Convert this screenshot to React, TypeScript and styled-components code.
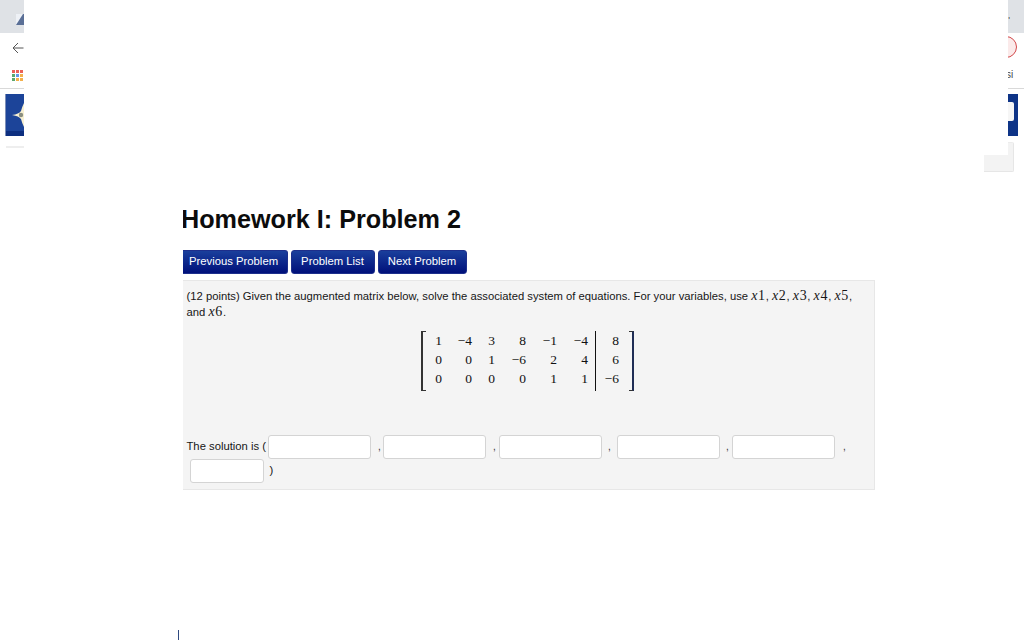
import React from 'react';
import styled, { createGlobalStyle } from 'styled-components';

const GlobalStyle = createGlobalStyle`
  html, body {
    margin: 0;
    padding: 0;
    background: #fff;
  }
  body {
    font-family: "Liberation Sans", Arial, sans-serif;
  }
`;

const Page = styled.div`
  position: relative;
  width: 1024px;
  height: 640px;
  overflow: hidden;
  display: grid;
  grid-template-columns: 24px 984px 16px;
`;

const SideStrip = styled.div`
  display: flex;
  flex-direction: column;
  height: 640px;
`;

const TabBar = styled.div`
  height: 33px;
  flex: none;
  background: #dfe2e6;
  box-sizing: border-box;
  display: flex;
  justify-content: flex-end;
  padding-top: 14px;
`;

const TabLogo = styled.div`
  width: 8px;
  height: 11px;
  background: #eef1f6;
  display: flex;
  align-items: flex-end;
  svg { display: block; }
`;

const TabCaret = styled.div`
  padding-top: 2px;
  margin-right: 14px;
  font-size: 9px;
  line-height: 8px;
  color: #444;
`;

const ToolRow = styled.div<{ $h: number }>`
  height: ${(p) => p.$h}px;
  flex: none;
  display: flex;
  align-items: center;
  padding-left: 12px;
`;

const RightToolRow = styled(ToolRow)`
  padding-left: 0;
  position: relative;
`;

const LabelRow = styled(ToolRow)`
  padding-left: 0;
  overflow: hidden;
`;

const AppsGrid = styled.div`
  display: grid;
  grid-template-columns: repeat(3, 3px);
  grid-auto-rows: 3px;
  gap: 1px;
  opacity: 0.85;
`;

const AppDot = styled.span<{ $c: string }>`
  background: ${(p) => p.$c};
`;

const Rule = styled.div`
  height: 1px;
  flex: none;
  background: #d9d9d9;
`;

const Banner = styled.div`
  flex: none;
  height: 42px;
  margin: 5px 0 0 5px;
  background: linear-gradient(#1c4499 0, #1c4499 37px, #0d2f80 37px);
  border-left: 1px solid #7d8fb8;
  display: flex;
  align-items: center;
  justify-content: flex-end;
  overflow: hidden;
`;

const RightBanner = styled.div`
  flex: none;
  height: 42px;
  width: 10px;
  margin-top: 5px;
  background: #0e3487;
  box-sizing: border-box;
  padding-top: 8px;
`;

const BannerPill = styled.div`
  width: 6px;
  height: 19px;
  background: #f6f6f6;
  border-radius: 0 2px 2px 0;
`;

const FaintLine = styled.div`
  flex: none;
  height: 2px;
  margin: 10px 0 0 6px;
  background: #eeeeee;
`;

const CornerBox = styled.div`
  flex: none;
  box-sizing: border-box;
  width: 6px;
  height: 30px;
  margin-top: 6px;
  background: #f3f3f3;
  border-right: 1px solid #e6e6e6;
  border-bottom: 1px solid #e6e6e6;
  border-top: 1px solid #ececec;
  border-radius: 0 2px 2px 0;
`;

const Circle = styled.div`
  position: absolute;
  left: -13px;
  top: 3px;
  width: 22px;
  height: 22px;
  box-sizing: border-box;
  border: 1px solid #d2484a;
  border-radius: 50%;
  background: #fbeaea;
  clip-path: inset(0 0 0 13px);
`;

const SmallLabel = styled.span`
  margin-left: -2px;
  font-size: 10px;
  line-height: 12px;
  color: #444;
`;

const Content = styled.main`
  display: flex;
  flex-direction: column;
  padding-left: 159px;
  height: 640px;
  box-sizing: border-box;
`;

const CornerTail = styled.div`
  align-self: flex-end;
  flex: none;
  box-sizing: border-box;
  width: 24px;
  height: 17px;
  margin-top: 155px;
  background: #f3f3f3;
  border-bottom: 1px solid #e6e6e6;
`;

const TitleClip = styled.div`
  margin-top: 32px;
  height: 30px;
  width: 400px;
  overflow: hidden;
`;

const Title = styled.h1`
  margin: 0 0 0 -2px;
  font-size: 25.2px;
  line-height: 30px;
  font-weight: 700;
  color: #0c0c0c;
  white-space: nowrap;
`;

const NavRow = styled.nav`
  display: flex;
  gap: 3px;
  margin-top: 16px;
`;

const NavButton = styled.button<{ $w: number; $first?: boolean }>`
  width: ${(p) => p.$w}px;
  height: 24px;
  padding: 0 ${(p) => (p.$first ? 3 : 1)}px 2px 0;
  border: 1px solid #1d2f8c;
  border-left-width: ${(p) => (p.$first ? 0 : 1)}px;
  border-radius: ${(p) => (p.$first ? '0 3px 3px 0' : '3px')};
  background: linear-gradient(#1a3f9c, #00107a);
  color: #fff;
  font-family: "Liberation Sans", Arial, sans-serif;
  font-size: 11.3px;
`;

const Panel = styled.section`
  width: 692px;
  height: 210px;
  margin-top: 6px;
  box-sizing: border-box;
  padding: 7px 4px 0 3.5px;
  background: #f4f4f4;
  border-top: 1px solid #e7e7e7;
  border-right: 1px solid #e7e7e7;
  border-bottom: 1px solid #e7e7e7;
  font-size: 11.25px;
  line-height: 16px;
  color: #161616;
`;

const Prompt = styled.p`
  margin: 0;
  width: 680px;
`;

const MathText = styled.span`
  font-family: "Liberation Serif", "Times New Roman", serif;
  font-size: 14px;
  letter-spacing: 0.65px;
`;

const Var = styled.i`
  font-style: italic;
`;

const MatrixWrap = styled.div`
  display: flex;
  margin: 11px 0 0 234.5px;
  width: 212px;
  height: 60px;
  position: relative;
  font-family: "Liberation Serif", "Times New Roman", serif;
  font-size: 13.5px;
  color: #111;
`;

const Bracket = styled.div<{ $side: 'left' | 'right' }>`
  flex: none;
  width: 5px;
  height: 60px;
  box-sizing: border-box;
  border-top: 1px solid #333;
  border-bottom: 1px solid #333;
  ${(p) =>
    p.$side === 'left'
      ? 'border-left: 2px solid #333;'
      : 'border-right: 2px solid #1f2d55; margin-left: 10px;'}
`;

const MatrixGrid = styled.div`
  flex: none;
  display: grid;
  grid-template-columns: 16px 30px 23px 31px 31px 31px 31px;
  grid-auto-rows: 19px;
`;

const Cell = styled.span`
  text-align: right;
  line-height: 19px;
  white-space: nowrap;
`;

const VBar = styled.div`
  position: absolute;
  left: 174px;
  top: 0;
  width: 1px;
  height: 60px;
  background: #111;
`;

const Answer = styled.div`
  margin-top: 44px;
  display: flex;
  flex-wrap: wrap;
  align-items: center;
`;

const AnswerLabel = styled.span`
  width: 81.5px;
  margin-top: -2px;
  white-space: nowrap;
`;

const AnswerBox = styled.input<{ $w: number; $ml?: number }>`
  width: ${(p) => p.$w}px;
  height: 24px;
  margin-left: ${(p) => p.$ml ?? 0}px;
  padding: 0;
  box-sizing: border-box;
  background: #fff;
  border: 1px solid #d4d4d4;
  border-radius: 3px;
`;

const Comma = styled.span<{ $w: number; $pl: number }>`
  width: ${(p) => p.$w}px;
  padding-left: ${(p) => p.$pl}px;
  box-sizing: border-box;
  font-size: 10px;
  color: #333;
`;

const Break = styled.div`
  flex-basis: 100%;
  height: 0;
`;

const CloseParen = styled.span`
  margin: -2px 0 0 6px;
`;

const BottomTick = styled.div`
  position: absolute;
  left: 178px;
  top: 630px;
  width: 1px;
  height: 10px;
  background: #2f4a80;
`;

const appColors = ['#e8453c', '#e8453c', '#e8453c', '#3f9a57', '#4a86e8', '#f2a32c', '#3f9a57', '#f2a32c', '#f2a32c'];

const matrix = [
  ['1', '−4', '3', '8', '−1', '−4', '8'],
  ['0', '0', '1', '−6', '2', '4', '6'],
  ['0', '0', '0', '0', '1', '1', '−6'],
];

const App: React.FC = () => {
  return (
    <Page>
      <GlobalStyle />
      <SideStrip>
        <TabBar>
          <TabLogo>
            <svg width="8" height="11" viewBox="0 0 8 11">
              <path d="M0 11 L7 0 L8 0 L8 11 Z" fill="#5a6f96" />
            </svg>
          </TabLogo>
        </TabBar>
        <ToolRow $h={29}>
          <svg width="12" height="12" viewBox="0 0 12 12" fill="none" stroke="#555" strokeWidth="1">
            <path d="M11.5 6 H1 M6 1 L1 6 L6 11" />
          </svg>
        </ToolRow>
        <ToolRow $h={26}>
          <AppsGrid>
            {appColors.map((c, i) => (
              <AppDot key={i} $c={c} />
            ))}
          </AppsGrid>
        </ToolRow>
        <Rule />
        <Banner>
          <svg width="12" height="30" viewBox="0 0 12 30">
            <path d="M0 15 Q7 14 9 11 Q10 7 12 3 L12 27 Q10 23 9 19 Q7 16 0 15 Z" fill="#f7f0d2" />
            <circle cx="9" cy="15" r="2.2" fill="#8b8f80" />
          </svg>
        </Banner>
        <FaintLine />
      </SideStrip>

      <Content>
        <CornerTail />
        <TitleClip>
          <Title>Homework I: Problem 2</Title>
        </TitleClip>
        <NavRow>
          <NavButton $w={105} $first>Previous Problem</NavButton>
          <NavButton $w={84}>Problem List</NavButton>
          <NavButton $w={89}>Next Problem</NavButton>
        </NavRow>
        <Panel>
          <Prompt>
            (12 points) Given the augmented matrix below, solve the associated system of equations. For your variables, use{' '}
            <MathText><Var>x</Var>1</MathText>, <MathText><Var>x</Var>2</MathText>, <MathText><Var>x</Var>3</MathText>,{' '}
            <MathText><Var>x</Var>4</MathText>, <MathText><Var>x</Var>5</MathText>, and <MathText><Var>x</Var>6</MathText>.
          </Prompt>
          <MatrixWrap>
            <Bracket $side="left" />
            <MatrixGrid>
              {matrix.flat().map((v, i) => (
                <Cell key={i}>{v}</Cell>
              ))}
            </MatrixGrid>
            <VBar />
            <Bracket $side="right" />
          </MatrixWrap>
          <Answer>
            <AnswerLabel>The solution is (</AnswerLabel>
            <AnswerBox $w={103} />
            <Comma $w={12} $pl={7}>,</Comma>
            <AnswerBox $w={103} />
            <Comma $w={13} $pl={7}>,</Comma>
            <AnswerBox $w={103} />
            <Comma $w={15} $pl={6}>,</Comma>
            <AnswerBox $w={103} />
            <Comma $w={12} $pl={6}>,</Comma>
            <AnswerBox $w={103} />
            <Comma $w={18} $pl={8}>,</Comma>
            <Break />
            <AnswerBox $w={74} $ml={3} />
            <CloseParen>)</CloseParen>
          </Answer>
        </Panel>
      </Content>

      <SideStrip>
        <TabBar>
          <TabCaret>'</TabCaret>
        </TabBar>
        <RightToolRow $h={29}>
          <Circle />
        </RightToolRow>
        <LabelRow $h={26}>
          <SmallLabel>si</SmallLabel>
        </LabelRow>
        <Rule />
        <RightBanner>
          <BannerPill />
        </RightBanner>
        <CornerBox />
      </SideStrip>
      <BottomTick />
    </Page>
  );
};

export default App;
